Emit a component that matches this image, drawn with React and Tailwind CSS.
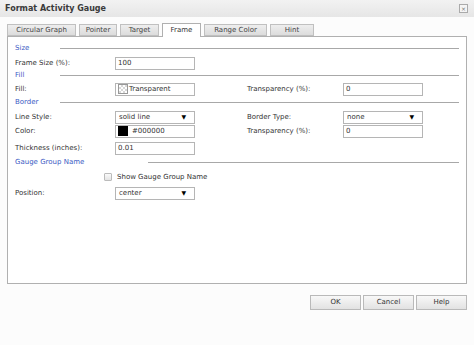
import React from 'react';

const tabs = ['Circular Graph', 'Pointer', 'Target', 'Frame', 'Range Color', 'Hint'];
const tabWidths = ['w-[69px]', 'w-[38px]', 'w-[39px]', 'w-[39px]', 'w-[63px]', 'w-[44px]'];

function Section({ title, lineStart = 'w-[45px]' }) {
  return (
    <div className="flex items-center h-[10px]">
      <span className={`${lineStart} shrink-0 text-[#3b5bc4] whitespace-nowrap`}>{title}</span>
      <div className="flex-1 h-px bg-[#a8a8a8]" />
    </div>
  );
}

function TextBox({ value, swatch }) {
  return (
    <div className="w-[80px] h-[13px] border border-[#b5b5b5] bg-white flex items-center px-[2px] gap-[1px]">
      {swatch === 'checker' && (
        <span className="w-[10px] h-[10px] border border-[#999] bg-[repeating-conic-gradient(#d8d8d8_0%_25%,#ffffff_0%_50%)] bg-[length:4px_4px]" />
      )}
      {swatch === 'black' && <span className="w-[10px] h-[10px] bg-black mr-[3px]" />}
      <span className="leading-none">{value}</span>
    </div>
  );
}

function SelectBox({ value }) {
  return (
    <div className="w-[80px] h-[13px] border border-[#b5b5b5] bg-white flex items-center justify-between pl-[3px] pr-[8px]">
      <span className="leading-none">{value}</span>
      <span className="text-[6px] leading-none text-black">▼</span>
    </div>
  );
}

function Row({ label, children, className = '' }) {
  return (
    <div className={`flex items-center h-[14px] ${className}`}>
      <span className="w-[100px] shrink-0">{label}</span>
      {children}
    </div>
  );
}

function Pair({ label, children }) {
  return (
    <div className="flex items-center">
      <span className="w-[52px]" />
      <span className="w-[96px] shrink-0">{label}</span>
      {children}
    </div>
  );
}

function Btn({ children }) {
  return (
    <button className="w-[51px] h-[15px] border border-[#b9b9b9] bg-gradient-to-b from-[#f8f8f8] to-[#e2e2e2] text-[#333] leading-none">
      {children}
    </button>
  );
}

export default function App() {
  return (
    <div className="w-[474px] h-[345px] bg-[#fcfcfc] text-[#333] text-[7px] font-['DejaVu_Sans',sans-serif] flex flex-col overflow-hidden">
      {/* title bar */}
      <div className="h-[17px] bg-gradient-to-b from-[#f2f2f2] to-[#e6e6e6] flex items-center justify-between pl-[5px] pr-[6px]">
        <span className="font-bold text-[8px] text-[#3a3a3a]">Format Activity Gauge</span>
        <span className="w-[9px] h-[9px] border border-[#aaa] bg-[#f4f4f4] flex items-center justify-center text-[6px] leading-none text-[#777]">×</span>
      </div>

      <div className="px-[7px] pt-[5px] flex flex-col">
        {/* tabs */}
        <div className="flex items-end gap-[3px] h-[14px]">
          {tabs.map((t, i) => (
            <div
              key={t}
              className={
                t === 'Frame'
                  ? `${tabWidths[i]} h-[14px] bg-white border border-[#b0b0b0] border-b-0 flex items-center justify-center relative z-10 -mb-px text-[#333]`
                  : `${tabWidths[i]} h-[12px] bg-gradient-to-b from-[#eeeeee] to-[#dcdcdc] border border-[#c0c0c0] flex items-center justify-center text-[#444]`
              }
            >
              {t}
            </div>
          ))}
        </div>

        {/* panel */}
        <div className="h-[248px] bg-white border border-[#b0b0b0] pl-[7px] pr-[7px] pt-[6px] flex flex-col">
          <Section title="Size" />
          <Row label="Frame Size (%):" className="mt-[3px]">
            <TextBox value="100" />
          </Row>
          <Section title="Fill" />
          <Row label="Fill:" className="mt-[2px]">
            <TextBox value="Transparent" swatch="checker" />
            <Pair label="Transparency (%):">
              <TextBox value="0" />
            </Pair>
          </Row>
          <div className="mt-px">
            <Section title="Border" />
          </div>
          <Row label="Line Style:" className="mt-[3px]">
            <SelectBox value="solid line" />
            <Pair label="Border Type:">
              <SelectBox value="none" />
            </Pair>
          </Row>
          <Row label="Color:">
            <TextBox value="#000000" swatch="black" />
            <Pair label="Transparency (%):">
              <TextBox value="0" />
            </Pair>
          </Row>
          <Row label="Thickness (inches):" className="mt-[3px]">
            <TextBox value="0.01" />
          </Row>
          <div className="mt-[2px]">
            <Section title="Gauge Group Name" lineStart="w-[133px]" />
          </div>
          <div className="flex items-center h-[14px] mt-[3px] pl-[89px] gap-[5px]">
            <span className="w-[8px] h-[8px] border border-[#bbb] rounded-[1px] bg-gradient-to-b from-[#fafafa] to-[#e4e4e4]" />
            <span>Show Gauge Group Name</span>
          </div>
          <Row label="Position:" className="mt-[2px]">
            <SelectBox value="center" />
          </Row>
        </div>

        {/* buttons */}
        <div className="flex justify-end gap-[2px] mt-[11px]">
          <Btn>OK</Btn>
          <Btn>Cancel</Btn>
          <Btn>Help</Btn>
        </div>
      </div>
    </div>
  );
}
